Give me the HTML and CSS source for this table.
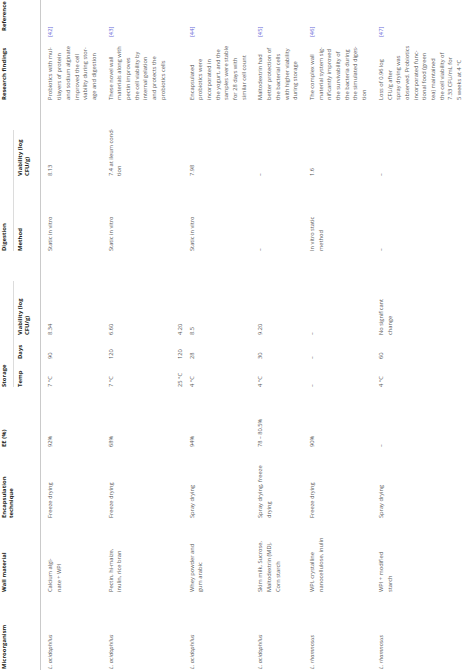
FILE: index.html
```html
<!DOCTYPE html>
<html>
<head>
<meta charset="utf-8">
<link rel="stylesheet" href="styles.css">
</head>
<body>
<div class="page">
  <div class="rot">
    <table class="tbl">
      <colgroup>
        <col class="w-micro"><col class="w-wall"><col class="w-enc"><col class="w-ee"><col class="w-temp"><col class="w-days"><col class="w-sv"><col class="w-meth"><col class="w-dv"><col class="w-res"><col class="w-ref">
      </colgroup>
      <thead>
        <tr>
          <th rowspan="2" class="first">Microorganism</th>
          <th rowspan="2">Wall material</th>
          <th rowspan="2">Encapsulation<br>technique</th>
          <th rowspan="2">EE (%)</th>
          <th colspan="3" class="grp"><div class="grp-in">Storage</div></th>
          <th colspan="2" class="grp"><div class="grp-in">Digestion</div></th>
          <th rowspan="2">Research findings</th>
          <th rowspan="2" class="ref-head">Reference</th>
        </tr>
        <tr class="sub">
          <th>Temp</th>
          <th>Days</th>
          <th>Viability (log<br>CFU/g)</th>
          <th>Method</th>
          <th>Viability (log<br>CFU/g)</th>
        </tr>
      </thead>
      <tbody>
        <tr>
          <td class="first"><i>L. acidophilus</i></td>
          <td>Calcium algi-<br>nate + WPI</td>
          <td>Freeze drying</td>
          <td>92%</td>
          <td>7 °C</td>
          <td>90</td>
          <td>8.34</td>
          <td>Static in vitro</td>
          <td>8.13</td>
          <td>Probiotics with mul-<br>tilayers of protein<br>and sodium alginate<br>improved the cell<br>viability during stor-<br>age and digestion</td>
          <td><span class="ref">[42]</span></td>
        </tr>
        <tr>
          <td class="first"><i>L. acidophilus</i></td>
          <td>Pectin, hi-maize,<br>inulin, rice bran</td>
          <td>Freeze drying</td>
          <td>68%</td>
          <td>7 °C</td>
          <td>120</td>
          <td>6.60</td>
          <td>Static in vitro</td>
          <td>7.4 at ileum cond-<br>tion</td>
          <td>These novel wall<br>materials along with<br>pectin improves<br>the cell viability by<br>internal gelation<br>and protects the<br>probiotics cells</td>
          <td><span class="ref">[43]</span></td>
        </tr>
        <tr class="split-top">
          <td class="first"></td>
          <td></td>
          <td></td>
          <td></td>
          <td>25 °C</td>
          <td>120</td>
          <td>4.20</td>
          <td></td>
          <td></td>
          <td></td>
          <td></td>
        </tr>
        <tr class="split-bottom">
          <td class="first"><i>L. acidophilus</i></td>
          <td>Whey powder and<br>gum arabic</td>
          <td>Spray drying</td>
          <td>94%</td>
          <td>4 °C</td>
          <td>28</td>
          <td>8.5</td>
          <td>Static in vitro</td>
          <td>7.98</td>
          <td>Encapsulated<br>probiotics were<br>incorporated in<br>the yogurt, and the<br>samples were stable<br>for 28 days with<br>similar cell count</td>
          <td><span class="ref">[44]</span></td>
        </tr>
        <tr>
          <td class="first"><i>L. acidophilus</i></td>
          <td>Skim milk, Sucrose,<br>Maltodextrin (MD),<br>Corn starch</td>
          <td>Spray drying, freeze<br>drying</td>
          <td>78 – 80.5%</td>
          <td>4 °C</td>
          <td>30</td>
          <td>9.20</td>
          <td>–</td>
          <td>–</td>
          <td>Maltodextrin had<br>better protection of<br>the bacterial cells<br>with higher viability<br>during storage</td>
          <td><span class="ref">[45]</span></td>
        </tr>
        <tr>
          <td class="first"><i>L. rhamnosus</i></td>
          <td>WPI, crystalline<br>nanocellulose, inulin</td>
          <td>Freeze drying</td>
          <td>90%</td>
          <td>–</td>
          <td>–</td>
          <td>–</td>
          <td>In vitro static<br>method</td>
          <td>1.6</td>
          <td>The complex wall<br>material system sig-<br>nificantly improved<br>the survivability of<br>the bacteria during<br>the simulated diges-<br>tion</td>
          <td><span class="ref">[46]</span></td>
        </tr>
        <tr>
          <td class="first"><i>L. rhamnosus</i></td>
          <td>WPI + modified<br>starch</td>
          <td>Spray drying</td>
          <td>–</td>
          <td>4 °C</td>
          <td>60</td>
          <td>No significant<br>change</td>
          <td>–</td>
          <td>–</td>
          <td>Loss of 0.96 log<br>CFU/g after<br>spray drying was<br>observed. Probiotics<br>incorporated func-<br>tional food (green<br>tea) maintained<br>the cell viability of<br>7.33 CFU/mL for<br>5 weeks at 4 °C</td>
          <td><span class="ref">[47]</span></td>
        </tr>
      </tbody>
    </table>
  </div>
</div>
</body>
</html>
```

FILE: styles.css
```css
html, body {
  margin: 0;
  padding: 0;
  background: #ffffff;
}

.page {
  width: 474px;
  height: 670px;
  overflow: hidden;
  background: #ffffff;
}

.rot {
  width: 1340px;
  height: 948px;
  transform-origin: 0 0;
  transform: translateY(670px) rotate(-90deg) scale(0.5);
}

.tbl {
  border-collapse: collapse;
  table-layout: fixed;
  width: 1400px;
  font-family: "Open Sans", "Noto Sans", sans-serif;
  font-size: 11.4px;
  line-height: 17.4px;
  color: #5a5a5a;
}

.w-micro { width: 156px; }
.w-wall { width: 148px; }
.w-enc { width: 142px; }
.w-ee { width: 120px; }
.w-temp { width: 56px; }
.w-days { width: 48px; }
.w-sv { width: 168px; }
.w-meth { width: 150px; }
.w-dv { width: 152px; }
.w-res { width: 126px; }
.w-ref { width: 134px; }

.tbl th {
  font-weight: 700;
  font-size: 11.8px;
  line-height: 14px;
  color: #231f20;
  text-align: left;
  vertical-align: top;
  padding: 0;
  white-space: nowrap;
  border-bottom: 1px solid #b8b8b8;
}

.tbl th.grp {
  border-bottom: none;
}

.tbl th.ref-head {
  padding-left: 12px;
}

.grp-in {
  padding-bottom: 13px;
  border-bottom: 1px solid #b8b8b8;
  margin-right: 60px;
}

.tbl tr.sub th {
  padding: 4px 0 21px 0;
}

.tbl td {
  vertical-align: top;
  text-align: left;
  white-space: nowrap;
  padding: 9.3px 0 6.7px 0;
}

.tbl .first {
  padding-left: 2px;
}

.tbl tr.split-top td {
  padding-bottom: 0;
}

.tbl tr.split-bottom td {
  padding-top: 6.6px;
}

.ref {
  color: #6a6ad8;
}
```
